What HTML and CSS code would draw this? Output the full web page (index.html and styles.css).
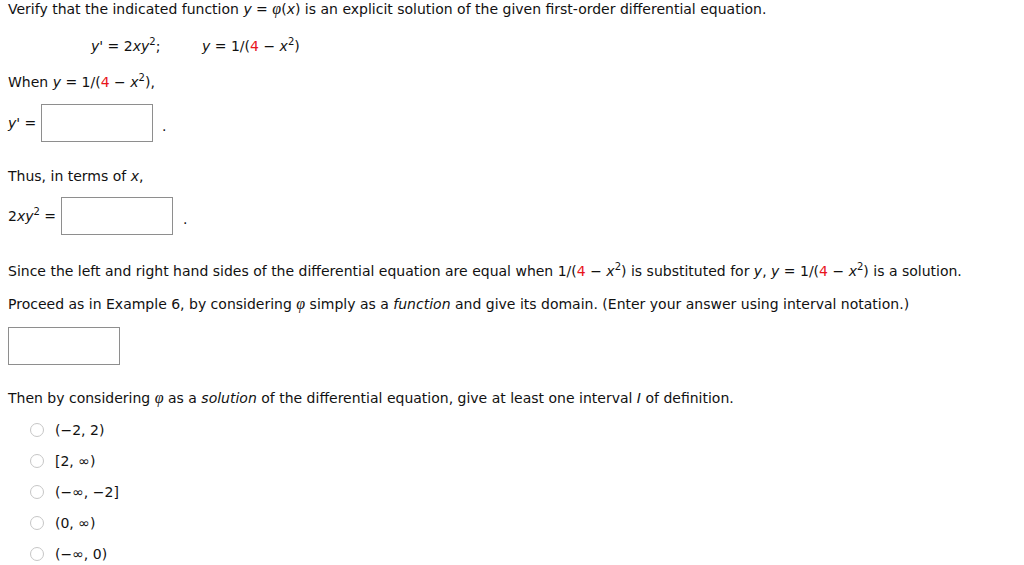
FILE: index.html
```html
<!DOCTYPE html>
<html>
<head>
<meta charset="utf-8">
<link rel="stylesheet" href="styles.css">
</head>
<body>
<div class="page">
  <p class="line intro">Verify that the indicated function <i>y</i> = <span class="phi">φ</span>(<i>x</i>) is an explicit solution of the given first-order differential equation.</p>
  <div class="line eq">
    <span class="eq1"><i>y</i>' = 2<i>xy</i><sup>2</sup>;</span>
    <span class="eq2"><i>y</i> = 1/(<span class="red">4</span> − <i>x</i><sup>2</sup>)</span>
  </div>
  <p class="line when">When <i>y</i> = 1/(<span class="red">4</span> − <i>x</i><sup>2</sup>),</p>
  <div class="row row1">
    <span class="lbl"><i>y</i>' =</span>
    <span class="box"></span>
    <span class="dot">.</span>
  </div>
  <p class="line thus">Thus, in terms of <i>x</i>,</p>
  <div class="row row2">
    <span class="lbl">2<i>xy</i><sup>2</sup> =</span>
    <span class="box"></span>
    <span class="dot">.</span>
  </div>
  <p class="line since">Since the left and right hand sides of the differential equation are equal when 1/(<span class="red">4</span> − <i>x</i><sup>2</sup>) is substituted for <i>y</i>, <i>y</i> = 1/(<span class="red">4</span> − <i>x</i><sup>2</sup>) is a solution.</p>
  <p class="line proceed">Proceed as in Example 6, by considering <span class="phi">φ</span> simply as a <i>function</i> and give its domain. (Enter your answer using interval notation.)</p>
  <div class="row row3"><span class="box"></span></div>
  <p class="line then">Then by considering <span class="phi">φ</span> as a <i>solution</i> of the differential equation, give at least one interval <i>I</i> of definition.</p>
  <ul class="opts">
    <li><span class="radio"></span>(−2, 2)</li>
    <li><span class="radio"></span>[2, ∞)</li>
    <li><span class="radio"></span>(−∞, −2]</li>
    <li><span class="radio"></span>(0, ∞)</li>
    <li><span class="radio"></span>(−∞, 0)</li>
  </ul>
</div>
</body>
</html>
```
FILE: styles.css
```css
html, body { margin: 0; padding: 0; background: #fff; }
body {
  font-family: "DejaVu Sans", Verdana, sans-serif;
  font-size: 14px;
  color: #111;
}
.page { padding: 0 8px; }
.line { margin: 0; line-height: 18px; height: 18px; white-space: nowrap; }
sup { font-size: 72%; line-height: 0; vertical-align: 0.55em; }
.red { color: #e8141b; }
.phi { font-family: "Liberation Serif", serif; font-style: italic; font-size: 16px; }
.intro { margin-top: 0; }
.eq { margin-top: 19px; display: flex; }
.eq1 { margin-left: 83px; width: 111px; }
.when { margin-top: 18px; }
.row { display: flex; align-items: center; }
.row1 { margin-top: 13px; }
.row1 .lbl { width: 33px; }
.row2 { margin-top: 12px; }
.row2 .lbl { width: 53px; }
.row3 { margin-top: 14px; }
.box {
  display: block;
  width: 110px; height: 36px;
  border: 1px solid #8e8e8e;
  background: #fff;
}
.dot { margin-left: 9px; padding-top: 6px; }
.row2 .dot { margin-left: 10px; }
.thus { margin-top: 25px; }
.since { margin-top: 27px; }
.proceed { margin-top: 15px; }
.then { margin-top: 24px; }
.opts { list-style: none; margin: 14px 0 0 0; padding: 0 0 0 22px; }
.opts li { display: flex; align-items: center; height: 18px; line-height: 18px; margin-bottom: 13px; }
.radio {
  display: inline-block;
  width: 14px; height: 14px;
  border: 1px solid #c6c6c6;
  border-radius: 50%;
  margin-right: 11px;
  box-sizing: border-box;
  background: #fff;
}
```
